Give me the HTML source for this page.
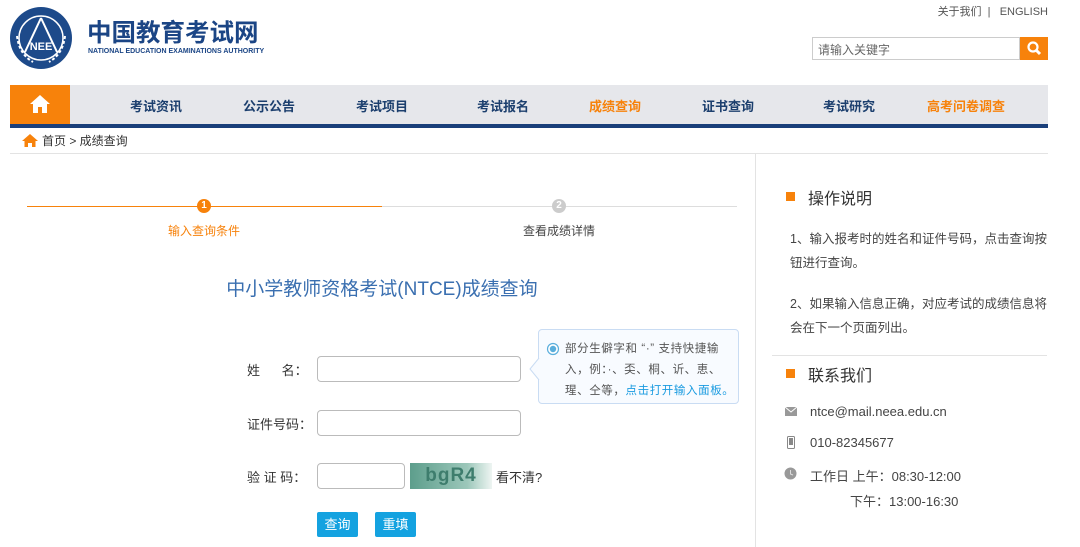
<!DOCTYPE html>
<html><head><meta charset="utf-8"><style>
*{margin:0;padding:0;box-sizing:border-box}
body{width:1080px;height:547px;overflow:hidden;background:#fff;font-family:"Liberation Sans","Noto Sans CJK SC",sans-serif;color:#333;position:relative}
.a{position:absolute;white-space:nowrap}
.nav{position:absolute;left:10px;top:85px;width:1038px;height:40px;background:#e6e7eb}
.nav span{position:absolute;top:11px;font-size:13px;font-weight:bold;color:#1c3f6e;transform:translateX(-50%)}
.nav span.o{color:#f7820b}
.in{position:absolute;border:1px solid #bbb;border-radius:4px;background:#fff}
.btn{position:absolute;background:#14a2e0;color:#fff;font-size:13px;text-align:center;line-height:25px;border-radius:2px}
.lbl{position:absolute;font-size:13px;color:#333}
.sq{position:absolute;width:9px;height:9px;background:#f7820b}
.p{font-size:13px;color:#444}
</style></head><body>
<svg class="a" style="left:9px;top:6px" width="64" height="64" viewBox="0 0 64 64">
<circle cx="32" cy="32" r="31" fill="#1d4a8a"/>
<circle cx="32" cy="32" r="22" fill="none" stroke="#fff" stroke-width="1.5"/>
<path d="M32 12 L16 46 M32 12 L48 46" stroke="#fff" stroke-width="2" fill="none"/>
<path d="M8 30 Q10 48 24 56 M56 30 Q54 48 40 56" stroke="#fff" stroke-width="2" stroke-dasharray="3 2" fill="none"/>
<text x="32" y="44" font-size="11" font-family="Liberation Sans" fill="#fff" text-anchor="middle" font-weight="bold">NEE</text>
</svg>
<div class="a" style="left:87px;top:14px;font-size:24.5px;font-weight:bold;color:#1b4585">中国教育考试网</div>
<div class="a" style="left:88px;top:48px;font-size:7px;font-weight:bold;color:#1b4585">NATIONAL EDUCATION EXAMINATIONS AUTHORITY</div>
<div class="a" style="right:32px;top:3px;font-size:11px;color:#555">关于我们 &nbsp;|&nbsp;&nbsp; ENGLISH</div>
<div class="a" style="left:812px;top:37px;width:208px;height:23px;border:1px solid #ccc;font-size:12px;color:#666;padding:3px 5px">请输入关键字</div>
<div class="a" style="left:1020px;top:37px;width:28px;height:23px;background:#f7820b"><svg width="28" height="23"><circle cx="13" cy="10" r="4.5" fill="none" stroke="#fff" stroke-width="2.2"/><path d="M16 13 L20 17" stroke="#fff" stroke-width="3"/></svg></div>
<div class="nav">
<div class="a" style="left:0;top:0;width:60px;height:40px;background:#f7820b"><svg width="60" height="40"><path d="M30 10 L20 19 H23 V28 H28 V22 H32 V28 H37 V19 H40 Z" fill="#fff"/></svg></div>
<span style="left:146px">考试资讯</span><span style="left:259px">公示公告</span><span style="left:372px">考试项目</span><span style="left:493px">考试报名</span><span class="o" style="left:605px">成绩查询</span><span style="left:718px">证书查询</span><span style="left:839px">考试研究</span><span class="o" style="left:956px">高考问卷调查</span>
</div>
<div class="a" style="left:10px;top:124px;width:1038px;height:4px;background:#1a3f7a"></div>
<svg class="a" style="left:22px;top:133px" width="16" height="14"><path d="M8 1 L0 8 H2.5 V14 H6 V10 H10 V14 H13.5 V8 H16 Z" fill="#f7820b"/></svg>
<div class="a" style="left:42px;top:132px;font-size:12px;color:#333">首页 &gt; 成绩查询</div>
<div class="a" style="left:10px;top:153px;width:1038px;height:1px;background:#e3e3e3"></div>
<div class="a" style="left:755px;top:154px;width:1px;height:393px;background:#e3e3e3"></div>
<div class="a" style="left:27px;top:206px;width:355px;height:1px;background:#f7820b"></div>
<div class="a" style="left:382px;top:206px;width:355px;height:1px;background:#ddd"></div>
<div class="a" style="left:197px;top:199px;width:14px;height:14px;border-radius:50%;background:#f7820b;color:#fff;font-size:10px;text-align:center;line-height:14px;font-weight:bold">1</div>
<div class="a" style="left:552px;top:199px;width:14px;height:14px;border-radius:50%;background:#ccc;color:#fff;font-size:10px;text-align:center;line-height:14px;font-weight:bold">2</div>
<div class="a" style="left:204px;top:222px;transform:translateX(-50%);font-size:12px;color:#f7820b">输入查询条件</div>
<div class="a" style="left:559px;top:222px;transform:translateX(-50%);font-size:12px;color:#444">查看成绩详情</div>
<div class="a" style="left:382px;top:274px;transform:translateX(-50%);font-size:19px;color:#3a6fb0">中小学教师资格考试(NTCE)成绩查询</div>
<div class="lbl" style="left:247px;top:360px">姓&nbsp;&nbsp;&nbsp;&nbsp;&nbsp;&nbsp;名：</div>
<div class="lbl" style="left:247px;top:414px">证件号码：</div>
<div class="lbl" style="left:247px;top:467px">验&nbsp;证&nbsp;码：</div>
<div class="in" style="left:317px;top:356px;width:204px;height:26px"></div>
<div class="in" style="left:317px;top:410px;width:204px;height:26px"></div>
<div class="in" style="left:317px;top:463px;width:88px;height:26px"></div>
<div class="a" style="left:410px;top:463px;width:82px;height:26px;background:linear-gradient(90deg,#5d9e8c,#9cc7ba 70%,#eef5f2);color:#3e7d6d;font-size:19px;font-weight:bold;text-align:center;line-height:26px;letter-spacing:1px">bgR4</div>
<div class="lbl" style="left:496px;top:467px;color:#333">看不清?</div>
<div class="btn" style="left:317px;top:512px;width:41px;height:25px">查询</div>
<div class="btn" style="left:375px;top:512px;width:41px;height:25px">重填</div>
<div class="a" style="left:538px;top:329px;width:201px;height:75px;border:1px solid #c9dcf3;border-radius:4px;background:#f8fbff"></div>
<svg class="a" style="left:529px;top:358px" width="11" height="22"><path d="M10 0 L1 11 L10 22" fill="#f8fbff" stroke="#c9dcf3"/></svg>
<svg class="a" style="left:546px;top:342px" width="14" height="14"><circle cx="7" cy="7" r="5.5" fill="#fff" stroke="#5aaedc" stroke-width="1.2"/><circle cx="7" cy="7" r="3.2" fill="#5aaedc"/></svg>
<div class="a" style="left:565px;top:339px;font-size:11.5px;color:#555;line-height:21px;letter-spacing:0.6px">部分生僻字和 “·” 支持快捷输<br>入，例：·、奀、桐、䜣、恵、<br>瑆、仝等，<span style="color:#1a9be0">点击打开输入面板。</span></div>
<div class="sq" style="left:786px;top:192px"></div>
<div class="a" style="left:808px;top:185px;font-size:16px;color:#333">操作说明</div>
<div class="a p" style="left:790px;top:227px;line-height:24px;font-size:12.5px">1、输入报考时的姓名和证件号码，点击查询按<br>钮进行查询。</div>
<div class="a p" style="left:790px;top:292px;line-height:24px;font-size:12.5px">2、如果输入信息正确，对应考试的成绩信息将<br>会在下一个页面列出。</div>
<div class="a" style="left:772px;top:355px;width:275px;height:1px;background:#e3e3e3"></div>
<div class="sq" style="left:786px;top:369px"></div>
<div class="a" style="left:808px;top:362px;font-size:16px;color:#333">联系我们</div>
<svg class="a" style="left:785px;top:407px" width="12" height="9"><rect width="12" height="9" fill="#999"/><path d="M0 0 L6 5 L12 0" stroke="#fff" fill="none"/></svg>
<div class="a p" style="left:810px;top:404px">ntce@mail.neea.edu.cn</div>
<svg class="a" style="left:787px;top:436px" width="8" height="13"><rect x="0.5" y="0.5" width="7" height="12" rx="1" fill="none" stroke="#888"/><rect x="2" y="2" width="4" height="7" fill="#888"/></svg>
<div class="a p" style="left:810px;top:435px">010-82345677</div>
<svg class="a" style="left:784px;top:467px" width="13" height="13"><circle cx="6.5" cy="6.5" r="6" fill="#999"/><path d="M6.5 3 V7 L9 8" stroke="#ddd" fill="none"/></svg>
<div class="a p" style="left:810px;top:466px">工作日 上午：08:30-12:00</div>
<div class="a p" style="left:850px;top:491px">下午：13:00-16:30</div>
</body></html>
